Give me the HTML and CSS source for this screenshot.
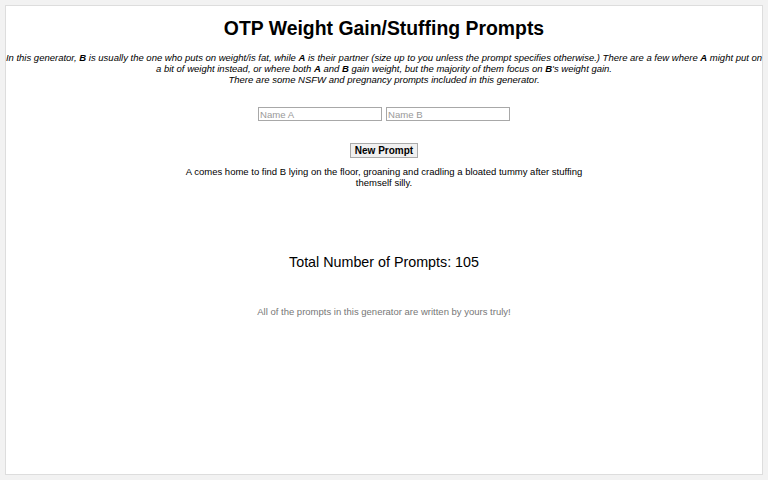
FILE: index.html
```html
<!DOCTYPE html>
<html lang="en">
<head>
    <meta charset="UTF-8">
    <meta name="viewport" content="width=device-width, initial-scale=1.0">
    <title>OTP Weight Gain/Stuffing Prompts</title>
    <link rel="stylesheet" href="styles.css">
</head>
<body>

    <div class="page">
        <h1>OTP Weight Gain/Stuffing Prompts</h1>

        <p class="intro">
            In this generator, <b>B</b> is usually the one who puts on weight/is fat, while <b>A</b> is their partner (size up to you unless the prompt specifies otherwise.) There are a few where <b>A</b> might put on<br>
            a bit of weight instead, or where both <b>A</b> and <b>B</b> gain weight, but the majority of them focus on <b>B</b>'s weight gain.<br>
            There are some NSFW and pregnancy prompts included in this generator.
        </p>

        <div class="names">
            <input type="text" id="nameA" placeholder="Name A">
            <input type="text" id="nameB" placeholder="Name B">
        </div>

        <button id="newPrompt">New Prompt</button>

        <p class="prompt" id="prompt">A comes home to find B lying on the floor, groaning and cradling a bloated tummy after stuffing themself silly.</p>

        <p class="total">Total Number of Prompts: <span id="count">105</span></p>

        <p class="credit">All of the prompts in this generator are written by yours truly!</p>
    </div>

</body>
</html>
```

FILE: styles.css
```css
body {
    font-family: "Liberation Sans", Arial, sans-serif;
    background: #f2f2f2;
    margin: 0;
    padding: 5px;
}

.page {
    background: #ffffff;
    border: 1px solid #dddddd;
    height: 470px;
    text-align: center;
    box-sizing: border-box;
}

h1 {
    font-size: 19.4px;
    margin: 11px 0 12px;
}

.intro {
    font-size: 9.5px;
    font-style: italic;
    line-height: 11px;
    margin: 0 -4px 22px;
}

.names {
    display: flex;
    justify-content: center;
    gap: 4px;
}

.names input {
    width: 124px;
    height: 14px;
    box-sizing: border-box;
    border: 1px solid #a8a8a8;
    font-family: inherit;
    font-size: 9.6px;
    padding: 0 1px;
}

.names input::placeholder {
    color: #999;
}

button {
    margin-top: 22px;
    font-family: inherit;
    font-size: 10px;
    font-weight: bold;
    padding: 1px 4px;
    border: 1px solid #aaa;
    background: #f0f0f0;
}

.prompt {
    font-size: 9.5px;
    line-height: 11px;
    width: 400px;
    margin: 8px auto 0;
}

.total {
    font-size: 14.3px;
    margin: 66px 0 0;
}

.credit {
    font-size: 9.5px;
    color: #777;
    margin: 36px 0 0;
}
```
